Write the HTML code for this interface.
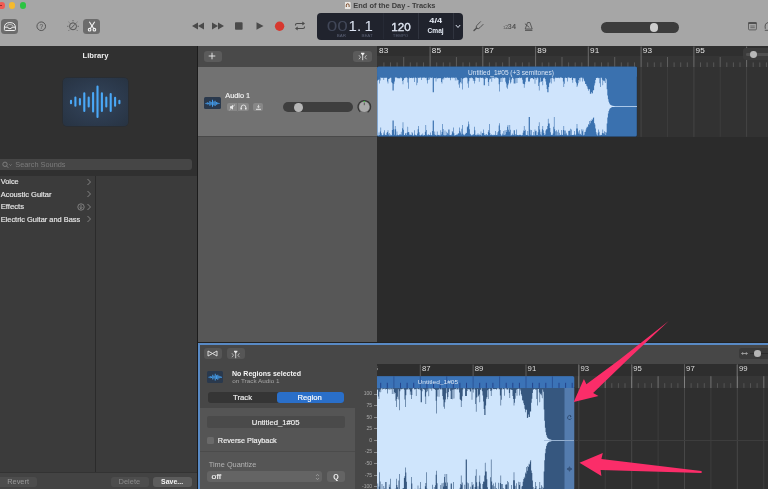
<!DOCTYPE html>
<html><head><meta charset="utf-8"><title>End of the Day - Tracks</title>
<style>
html,body{margin:0;padding:0;background:#2d2d2d;}
body{width:768px;height:489px;overflow:hidden;position:relative;font-family:"Liberation Sans",sans-serif;-webkit-font-smoothing:antialiased;}
.a{position:absolute;}
.t{position:absolute;white-space:nowrap;line-height:1;}
.rl{font-family:"Liberation Sans",sans-serif;font-size:8px;fill:#e6e6e6;}
#toolbar{left:0;top:0;width:768px;height:45.7px;background:#a6a6a6;}
.btn{position:absolute;border-radius:3px;}
.lib-item{position:absolute;left:1px;font-size:8.2px;color:#e4e4e4;line-height:1;white-space:nowrap;}
.chev{position:absolute;left:86px;width:6px;height:8px;}
#wrap{position:absolute;left:0;top:0;width:768px;height:489px;overflow:hidden;filter:url(#soft);}
</style></head><body>
<svg width="0" height="0" style="position:absolute"><filter id="soft" x="0" y="0" width="100%" height="100%" color-interpolation-filters="sRGB"><feGaussianBlur stdDeviation="0.5" edgeMode="duplicate"/></filter></svg>
<div id="wrap">

<!-- ================= TOOLBAR ================= -->
<div id="toolbar" class="a"></div>
<!-- traffic lights -->
<div class="a" style="left:-2.200px;top:2.200px;width:6.700px;height:6.700px;border-radius:50%;background:#f25a52"></div><div class="a" style="left:-1px;top:5px;width:3px;height:1.200px;background:#8e2f2a"></div>
<div class="a" style="left:8.750px;top:2.200px;width:6.700px;height:6.700px;border-radius:50%;background:#f5ba2e"></div>
<div class="a" style="left:19.750px;top:2.200px;width:6.700px;height:6.700px;border-radius:50%;background:#2cc442"></div>
<!-- title -->
<svg class="a" style="left:344px;top:1px" width="8" height="9" viewBox="0 0 8 9"><rect x="0.5" y="0.5" width="6.5" height="8" rx="1.2" fill="#e9e6e2" stroke="#8a8a8a" stroke-width="0.5"/><path d="M2.3 6V4.2a1.4 1.4 0 0 1 2.8 0V6" fill="none" stroke="#7a4a2a" stroke-width="1"/></svg>

<!-- library button (selected) -->
<div class="btn" style="left:1px;top:18.8px;width:17px;height:14.8px;border-radius:3.5px;background:#6c6c6c"></div>
<svg class="a" style="left:0;top:18px" width="20" height="16" viewBox="0 18 20 16" fill="none" stroke="#f0f0f0" stroke-width="1" stroke-linejoin="round"><path d="M4.400 27.200Q4.600 22.600 9.900 22.600T15.400 27.200"/><path d="M6.600 26.300Q7 24.500 9.900 24.500T13.200 26.300" stroke-width="0.700" stroke="#d8d8d8"/><path d="M4.400 27.200H7.900Q8 28.700 9.900 28.700T11.900 27.200H15.400V29.600Q15.400 30.500 14.400 30.500H5.400Q4.400 30.500 4.400 29.600Z"/></svg>
<!-- help -->
<svg class="a" style="left:36px;top:20.700px;will-change:transform" width="10.500" height="10.500" viewBox="0 0 10.500 10.500"><circle cx="5.250" cy="5.250" r="4.300" fill="none" stroke="#4d4d4d" stroke-width="0.900"/><text x="5.250" y="7.600" font-size="6.500" font-family="Liberation Sans,sans-serif" text-anchor="middle" fill="#4d4d4d">?</text></svg>
<!-- smart controls dial -->
<svg class="a" style="left:66px;top:19px" width="14" height="14" viewBox="0 0 14 14" fill="none" stroke="#4a4a4a"><circle cx="7" cy="7.300" r="3.500" stroke-width="0.900"/><path d="M5.200 9.100 8.800 5.500" stroke-width="0.900"/><g stroke-width="0.900" stroke-dasharray="1 100"><path d="M1.300 7.300h1"/><path d="M2.700 3l.7.700"/><path d="M7 1.200v1"/><path d="M11.300 3l-.7.700"/><path d="M12.700 7.300h-1"/><path d="M2.700 11.600l.7-.7"/><path d="M11.300 11.600l-.7-.7"/></g></svg>
<!-- scissors (selected) -->
<div class="btn" style="left:83px;top:18.8px;width:17px;height:14.8px;border-radius:3.5px;background:#6c6c6c"></div>
<svg class="a" style="left:86.500px;top:21px" width="10" height="11" viewBox="0 0 10 11" fill="none" stroke="#f4f4f4" stroke-width="1.100"><path d="M2.300 .8 6.800 7.800"/><path d="M7.700 .8 3.200 7.800"/><circle cx="2.600" cy="8.700" r="1.300"/><circle cx="7.400" cy="8.700" r="1.300"/></svg>

<!-- transport -->
<svg class="a" style="left:190px;top:20px" width="120" height="12" viewBox="0 0 120 12">
<g fill="#4a4a4a">
<path d="M2 6 8 2.500V9.500Z"/><path d="M8 6 14 2.500V9.500Z"/>
<path d="M22 2.500 28 6 22 9.500Z"/><path d="M28 2.500 34 6 28 9.500Z"/>
<rect x="45" y="2.200" width="7.600" height="7.600" rx="0.800"/>
<path d="M66.500 2.300 73.500 6 66.500 9.700Z"/>
</g>
<circle cx="89.600" cy="6.200" r="4.700" fill="#d7382f"/>
<g fill="none" stroke="#4a4a4a" stroke-width="1.100"><path d="M105.500 5.500V5Q105.500 3.500 107 3.500H113"/><path d="M114.500 6.500V7Q114.500 8.500 113 8.500H107"/></g>
<path d="M112.300 1.500 115 3.500 112.300 5.500Z" fill="#4a4a4a"/><path d="M107.700 6.500 105 8.500 107.700 10.500Z" fill="#4a4a4a"/>
</svg>

<!-- LCD -->
<div class="a" style="left:317px;top:12.500px;width:146px;height:27px;border-radius:4px;background:#20232d"></div>
<div class="a" style="left:382.600px;top:13px;width:1px;height:26px;background:#262a35"></div>
<div class="a" style="left:418.200px;top:13px;width:1px;height:26px;background:#30343f"></div>
<div class="a" style="left:452.800px;top:13px;width:1px;height:26px;background:#30343f"></div>
<svg class="a" style="left:455.100px;top:24.200px" width="6" height="5" viewBox="0 0 6 5"><path d="M.8 1 3 3.500 5.200 1" fill="none" stroke="#dfe6f2" stroke-width="1"/></svg>

<!-- tuner -->
<svg class="a" style="left:468px;top:14px" width="24" height="24" viewBox="468 14 24 24" fill="none" stroke="#505050" stroke-linecap="round"><path d="M474 30.600 476.700 27.900" stroke-width="1.400"/><path d="M480.500 21.700 476.900 25.400Q475.400 27.200 476.700 28.300 478.200 29.400 479.900 27.700L483.100 24.400" stroke-width="0.950"/></svg>
<!-- count-in -->
<!-- metronome -->
<svg class="a" style="left:520px;top:18px" width="18" height="16" viewBox="520 18 18 16" fill="none" stroke="#4c4c4c" stroke-width="0.850" stroke-linejoin="round"><path d="M527.600 22.500H529.900L532.200 29H525.200Z"/><path d="M525 30.300H532.400" stroke-width="1"/><path d="M529.300 27.400 524.900 23.700" stroke-width="0.900"/></svg>

<!-- master volume -->
<div class="a" style="left:601px;top:22px;width:78px;height:11px;border-radius:5.500px;background:#3c3c3c"></div>
<div class="a" style="left:649.600px;top:23.100px;width:8.800px;height:8.800px;border-radius:50%;background:#cdcdcd"></div>
<!-- right icons -->
<svg class="a" style="left:744px;top:18px" width="24" height="16" viewBox="744 18 24 16" fill="none" stroke="#4c4c4c"><rect x="748.500" y="22.600" width="7.900" height="7.300" rx="1" stroke-width="0.800"/><path d="M748.300 23.100H756.600" stroke-width="1.700"/><path d="M750.300 26H754.800M750.300 27.700H754.800" stroke-width="0.800" stroke="#5a5a5a"/><path d="M765.300 28.800Q764.300 22.800 768.500 22.500" stroke-width="0.900"/><path d="M764.800 30.300H769" stroke-width="0.900"/></svg>

<!-- ================= LIBRARY ================= -->
<div class="a" style="left:0;top:45.6px;width:197px;height:130px;background:#303030"></div>
<div class="a" style="left:0;top:175.600px;width:197px;height:296.400px;background:#3b3b3b"></div>
<div class="a" style="left:0;top:472px;width:197.500px;height:17px;background:#434343"></div>
<div class="a" style="left:94.700px;top:175.600px;width:1px;height:296.400px;background:#2b2b2b"></div>
<div class="a" style="left:0;top:471.500px;width:197.500px;height:1px;background:#333"></div>
<div class="a" style="left:196.8px;top:45.7px;width:1.5px;height:443.3px;background:#1c1c1c"></div>
<!-- icon -->
<div class="a" style="left:62.500px;top:77.500px;width:65.500px;height:48.500px;border-radius:4px;background:radial-gradient(ellipse at 50% 50%,#34465c 0%,#2c3a4d 60%,#273342 100%);box-shadow:0 0 0 0.500px #222a35"></div>
<svg class="a" style="left:62.500px;top:77.500px" width="65.500" height="48.500" viewBox="0 0 65.500 48.500" stroke="#4aa8f7" stroke-width="2.100" stroke-linecap="round">
<path d="M8 22.700v2.600M12.400 19.500v8.200M16.900 21v5.500M21.300 15.200v17.800M25.700 19.500v9M30.100 15v18.500M34.500 8.500v30.500M38.900 15.200v17.800M43.300 19.500v9M47.700 16v17M52.100 19.700v8M56.400 22.700v2.600"/></svg>
<!-- search -->
<div class="a" style="left:-3px;top:159px;width:195px;height:10.500px;border-radius:3px;background:#464646"></div>
<svg class="a" style="left:1.500px;top:160.500px" width="11" height="8" viewBox="0 0 11 8" fill="none" stroke="#8a8a8a" stroke-width="0.800"><circle cx="3" cy="3.300" r="2.200"/><path d="M4.600 5 6.300 6.800"/><path d="M7.500 3.500 8.500 4.500 9.500 3.500"/></svg>
<!-- list -->
<svg class="chev" style="top:177.500px" viewBox="0 0 6 8"><path d="M1.500 1 4.500 4 1.500 7" fill="none" stroke="#8c8c8c" stroke-width="0.900"/></svg>
<svg class="chev" style="top:190px" viewBox="0 0 6 8"><path d="M1.500 1 4.500 4 1.500 7" fill="none" stroke="#8c8c8c" stroke-width="0.900"/></svg>
<svg class="chev" style="top:202.700px" viewBox="0 0 6 8"><path d="M1.500 1 4.500 4 1.500 7" fill="none" stroke="#8c8c8c" stroke-width="0.900"/></svg>
<svg class="chev" style="top:215.400px" viewBox="0 0 6 8"><path d="M1.500 1 4.500 4 1.500 7" fill="none" stroke="#8c8c8c" stroke-width="0.900"/></svg>
<svg class="a" style="left:76.500px;top:202.500px" width="8" height="8" viewBox="0 0 8 8" fill="none" stroke="#9c9c9c" stroke-width="0.700"><circle cx="4" cy="4" r="3.200"/><path d="M4 2v3.500M2.600 4.300 4 5.700 5.400 4.300"/></svg>
<!-- bottom buttons -->
<div class="btn" style="left:-3px;top:476.500px;width:40px;height:10.500px;background:#4d4d4d"></div>
<div class="btn" style="left:110.500px;top:476.500px;width:38px;height:10.500px;background:#4d4d4d"></div>
<div class="btn" style="left:153px;top:476.500px;width:38.500px;height:10.500px;background:#5c5c5c"></div>

<!-- ================= TRACK HEADERS ================= -->
<div class="a" style="left:197.7px;top:45.6px;width:179.3px;height:21.2px;background:#494949"></div>
<div class="a" style="left:197.7px;top:67px;width:179.3px;height:69.300px;background:#727272"></div>
<div class="a" style="left:197.7px;top:136.500px;width:179.3px;height:205.300px;background:#575757"></div>
<div class="a" style="left:198px;top:136.200px;width:179px;height:0.900px;background:#494949"></div>
<div class="a" style="left:376.500px;top:46px;width:1px;height:296px;background:#2a2a2a"></div>
<!-- + button -->
<div class="btn" style="left:203.700px;top:50.500px;width:18.200px;height:11.100px;background:#5b5b5b"></div>
<svg class="a" style="left:208.400px;top:52.400px" width="8" height="8" viewBox="0 0 8 8"><path d="M4 .7V7.300M.7 4H7.300" stroke="#ededed" stroke-width="0.900"/></svg>
<div class="btn" style="left:353px;top:50.500px;width:18.500px;height:11.100px;background:#5b5b5b"></div>
<svg class="a" style="left:353px;top:50px" width="19" height="12" viewBox="353 50 19 12"><path d="M361 52.700H364.400V53.800L362.700 55.400 361 53.800Z" fill="#f2f2f2"/><path d="M362.700 55V60.200" stroke="#e6e6e6" stroke-width="0.900"/><path d="M358.900 55.200 360.600 57.200 358.900 59.200M366.500 55.200 364.800 57.200 366.500 59.200" fill="none" stroke="#d4d4d4" stroke-width="0.800"/></svg>
<!-- track row -->
<div class="a" style="left:204px;top:96.500px;width:17px;height:12.500px;border-radius:1.500px;background:#2a394d"></div>
<svg class="a" style="left:204px;top:96.500px" width="17" height="12.500" viewBox="0 0 17 12.500" stroke="#439ae8" stroke-width="1.050"><path d="M2 6v1M3.300 5.200v2.400M4.600 5.700v1.500M5.900 4v4.800M7.200 5v2.800M8.500 2.800v7M9.800 4.500v3.800M11.100 3.800v5.200M12.400 5v2.800M13.700 5.500v1.800M15 6v1"/></svg>
<div class="btn" style="left:226.500px;top:102.800px;width:22px;height:8.500px;border-radius:2px;background:#878787"></div>
<div class="a" style="left:237.300px;top:103px;width:0.600px;height:8.500px;background:#777"></div>
<svg class="a" style="left:228.500px;top:104px" width="7" height="6.500" viewBox="0 0 7 6.500"><path d="M1 2.300H2.300L4 .8V5.700L2.300 4.200H1Z" fill="#e8e8e8"/><path d="M.6 5.900 6 .6" stroke="#e8e8e8" stroke-width="0.700"/></svg>
<svg class="a" style="left:239.500px;top:104px" width="7" height="6.500" viewBox="0 0 7 6.500" fill="none" stroke="#f0f0f0" stroke-width="0.800"><path d="M1.200 4.500V3.300A2.300 2.300 0 0 1 5.800 3.300V4.500"/><path d="M1.200 3.800V5.600M5.800 3.800V5.600" stroke-width="1.400"/></svg>
<div class="btn" style="left:252.500px;top:102.800px;width:10.500px;height:8.500px;border-radius:2px;background:#878787"></div>
<svg class="a" style="left:254.500px;top:104px" width="7" height="6.500" viewBox="0 0 7 6.500"><path d="M3.500 .8V3.500M2.200 2.500 3.500 3.800 4.800 2.500" fill="none" stroke="#e4e4e4" stroke-width="0.800"/><path d="M1 5.300H6" stroke="#e4e4e4" stroke-width="1"/></svg>
<div class="a" style="left:282.700px;top:102.200px;width:70.500px;height:10.100px;border-radius:5.050px;background:#3e3e3e"></div>
<div class="a" style="left:293.900px;top:102.800px;width:8.800px;height:8.800px;border-radius:50%;background:#b6b6b6"></div>
<svg class="a" style="left:356px;top:99px" width="16" height="16" viewBox="0 0 16 16"><circle cx="8.300" cy="7.900" r="6.300" fill="none" stroke="#353535" stroke-width="1.300" stroke-dasharray="31 8.600" transform="rotate(130 8.300 7.900)"/><circle cx="8.300" cy="7.900" r="5.100" fill="#a9a9a9"/><circle cx="8.300" cy="2.600" r="0.750" fill="#43c843"/><path d="M8.300 3.600V6.200" stroke="#4a4a4a" stroke-width="0.900"/></svg>

<!-- ================= TRACKS AREA ================= -->
<div class="a" style="left:377.3px;top:45.6px;width:390.7px;height:21.4px;background:#2f2f2f"></div>
<div class="a" style="left:377.3px;top:56px;width:390.7px;height:11px;background:#353535"></div>
<div class="a" style="left:377.300px;top:67px;width:390.700px;height:69.900px;background:#323232"></div>
<div class="a" style="left:377.300px;top:136.900px;width:390.700px;height:204.800px;background:#2b2b2b"></div>
<svg class="a" style="left:0;top:0" width="768" height="489" viewBox="0 0 768 489">
<rect x="383.4" y="62.4" width="1" height="4.6" fill="#575757"/>
<rect x="390.0" y="62.4" width="1" height="4.6" fill="#575757"/>
<rect x="396.6" y="62.4" width="1" height="4.6" fill="#575757"/>
<rect x="403.2" y="57" width="1" height="10" fill="#5e5e5e"/>
<rect x="409.8" y="62.4" width="1" height="4.6" fill="#575757"/>
<rect x="416.4" y="62.4" width="1" height="4.6" fill="#575757"/>
<rect x="423.0" y="62.4" width="1" height="4.6" fill="#575757"/>
<rect x="429.6" y="46.5" width="1" height="20.5" fill="#6c6c6c"/>
<rect x="436.2" y="62.4" width="1" height="4.6" fill="#575757"/>
<rect x="442.8" y="62.4" width="1" height="4.6" fill="#575757"/>
<rect x="449.4" y="62.4" width="1" height="4.6" fill="#575757"/>
<rect x="455.9" y="57" width="1" height="10" fill="#5e5e5e"/>
<rect x="462.5" y="62.4" width="1" height="4.6" fill="#575757"/>
<rect x="469.1" y="62.4" width="1" height="4.6" fill="#575757"/>
<rect x="475.7" y="62.4" width="1" height="4.6" fill="#575757"/>
<rect x="482.3" y="46.5" width="1" height="20.5" fill="#6c6c6c"/>
<rect x="488.9" y="62.4" width="1" height="4.6" fill="#575757"/>
<rect x="495.5" y="62.4" width="1" height="4.6" fill="#575757"/>
<rect x="502.1" y="62.4" width="1" height="4.6" fill="#575757"/>
<rect x="508.7" y="57" width="1" height="10" fill="#5e5e5e"/>
<rect x="515.3" y="62.4" width="1" height="4.6" fill="#575757"/>
<rect x="521.9" y="62.4" width="1" height="4.6" fill="#575757"/>
<rect x="528.5" y="62.4" width="1" height="4.6" fill="#575757"/>
<rect x="535.1" y="46.5" width="1" height="20.5" fill="#6c6c6c"/>
<rect x="541.7" y="62.4" width="1" height="4.6" fill="#575757"/>
<rect x="548.3" y="62.4" width="1" height="4.6" fill="#575757"/>
<rect x="554.9" y="62.4" width="1" height="4.6" fill="#575757"/>
<rect x="561.5" y="57" width="1" height="10" fill="#5e5e5e"/>
<rect x="568.1" y="62.4" width="1" height="4.6" fill="#575757"/>
<rect x="574.7" y="62.4" width="1" height="4.6" fill="#575757"/>
<rect x="581.3" y="62.4" width="1" height="4.6" fill="#575757"/>
<rect x="587.8" y="46.5" width="1" height="20.5" fill="#6c6c6c"/>
<rect x="594.4" y="62.4" width="1" height="4.6" fill="#575757"/>
<rect x="601.0" y="62.4" width="1" height="4.6" fill="#575757"/>
<rect x="607.6" y="62.4" width="1" height="4.6" fill="#575757"/>
<rect x="614.2" y="57" width="1" height="10" fill="#5e5e5e"/>
<rect x="620.8" y="62.4" width="1" height="4.6" fill="#575757"/>
<rect x="627.4" y="62.4" width="1" height="4.6" fill="#575757"/>
<rect x="634.0" y="62.4" width="1" height="4.6" fill="#575757"/>
<rect x="640.6" y="46.5" width="1" height="20.5" fill="#6c6c6c"/>
<rect x="647.2" y="62.4" width="1" height="4.6" fill="#575757"/>
<rect x="653.8" y="62.4" width="1" height="4.6" fill="#575757"/>
<rect x="660.4" y="62.4" width="1" height="4.6" fill="#575757"/>
<rect x="667.0" y="57" width="1" height="10" fill="#5e5e5e"/>
<rect x="673.6" y="62.4" width="1" height="4.6" fill="#575757"/>
<rect x="680.2" y="62.4" width="1" height="4.6" fill="#575757"/>
<rect x="686.8" y="62.4" width="1" height="4.6" fill="#575757"/>
<rect x="693.4" y="46.5" width="1" height="20.5" fill="#6c6c6c"/>
<rect x="700.0" y="62.4" width="1" height="4.6" fill="#575757"/>
<rect x="706.6" y="62.4" width="1" height="4.6" fill="#575757"/>
<rect x="713.2" y="62.4" width="1" height="4.6" fill="#575757"/>
<rect x="719.7" y="57" width="1" height="10" fill="#5e5e5e"/>
<rect x="726.3" y="62.4" width="1" height="4.6" fill="#575757"/>
<rect x="732.9" y="62.4" width="1" height="4.6" fill="#575757"/>
<rect x="739.5" y="62.4" width="1" height="4.6" fill="#575757"/>
<rect x="746.1" y="46.5" width="1" height="20.5" fill="#6c6c6c"/>
<rect x="752.7" y="62.4" width="1" height="4.6" fill="#575757"/>
<rect x="759.3" y="62.4" width="1" height="4.6" fill="#575757"/>
<rect x="765.9" y="62.4" width="1" height="4.6" fill="#575757"/>
<rect x="772.5" y="57" width="1" height="10" fill="#5e5e5e"/>
<rect x="779.1" y="62.4" width="1" height="4.6" fill="#575757"/>
<rect x="785.7" y="62.4" width="1" height="4.6" fill="#575757"/>
<rect x="792.3" y="62.4" width="1" height="4.6" fill="#575757"/>
<rect x="640.6" y="67" width="1" height="69.9" fill="#444444"/>
<rect x="667.0" y="67" width="1" height="69.9" fill="#3c3c3c"/>
<rect x="693.4" y="67" width="1" height="69.9" fill="#444444"/>
<rect x="719.7" y="67" width="1" height="69.9" fill="#3c3c3c"/>
<rect x="746.1" y="67" width="1" height="69.9" fill="#444444"/>
<rect x="772.5" y="67" width="1" height="69.9" fill="#3c3c3c"/>
<rect x="377.100" y="66.700" width="260.100" height="70.200" rx="1.500" fill="#1f2a38"/><rect x="377.100" y="66.700" width="259.700" height="69.800" rx="1.500" fill="#3a71af"/>
<path d="M377.5 106.4V80.6 H378.1V80.0 H378.7V79.3 H379.3V83.4 H379.9V80.6 H380.5V77.5 H381.1V78.1 H381.7V77.6 H382.3V78.1 H382.9V77.8 H383.5V80.1 H384.1V78.0 H384.7V77.6 H385.3V78.1 H385.9V77.4 H386.5V78.1 H387.1V81.6 H387.7V83.4 H388.3V78.9 H388.9V79.0 H389.5V77.9 H390.1V77.7 H390.7V77.8 H391.3V82.2 H391.9V83.3 H392.5V90.5 H393.1V90.5 H393.7V83.7 H394.3V81.5 H394.9V77.6 H395.5V77.4 H396.1V77.6 H396.7V77.8 H397.3V78.2 H397.9V78.0 H398.5V78.6 H399.1V78.2 H399.7V78.2 H400.3V77.5 H400.9V77.8 H401.5V78.2 H402.1V81.0 H402.7V84.3 H403.3V80.1 H403.9V77.9 H404.5V78.2 H405.1V77.7 H405.7V77.6 H406.3V77.5 H406.9V77.9 H407.5V82.5 H408.1V88.7 H408.7V78.4 H409.3V77.6 H409.9V77.9 H410.5V77.9 H411.1V77.8 H411.7V78.0 H412.3V78.2 H412.9V77.4 H413.5V78.1 H414.1V81.9 H414.7V77.7 H415.3V77.5 H415.9V78.1 H416.5V85.2 H417.1V82.7 H417.7V77.4 H418.3V78.1 H418.9V77.9 H419.5V77.4 H420.1V77.4 H420.7V77.8 H421.3V80.0 H421.9V77.4 H422.5V78.0 H423.1V77.4 H423.7V77.8 H424.3V77.4 H424.9V78.1 H425.5V77.7 H426.1V77.7 H426.7V80.3 H427.3V83.4 H427.9V80.1 H428.5V77.8 H429.1V79.4 H429.7V77.5 H430.3V77.8 H430.9V77.8 H431.5V78.1 H432.1V77.5 H432.7V92.3 H433.3V92.3 H433.9V78.1 H434.5V78.2 H435.1V77.9 H435.7V81.4 H436.3V77.8 H436.9V78.8 H437.5V78.2 H438.1V78.0 H438.7V78.6 H439.3V78.1 H439.9V78.0 H440.5V78.3 H441.1V81.9 H441.7V83.4 H442.3V79.3 H442.9V78.1 H443.5V79.6 H444.1V77.5 H444.7V77.4 H445.3V78.0 H445.9V77.7 H446.5V77.7 H447.1V77.6 H447.7V77.5 H448.3V78.1 H448.9V77.8 H449.5V77.8 H450.1V80.3 H450.7V78.0 H451.3V77.6 H451.9V77.5 H452.5V78.2 H453.1V77.4 H453.7V78.1 H454.3V77.7 H454.9V80.5 H455.5V77.5 H456.1V77.8 H456.7V80.6 H457.3V79.6 H457.9V79.9 H458.5V84.4 H459.1V87.8 H459.7V83.3 H460.3V82.1 H460.9V77.9 H461.5V83.6 H462.1V89.6 H462.7V79.0 H463.3V78.0 H463.9V77.8 H464.5V78.1 H465.1V77.6 H465.7V77.7 H466.3V77.5 H466.9V78.2 H467.5V83.6 H468.1V87.8 H468.7V81.2 H469.3V78.1 H469.9V78.2 H470.5V77.7 H471.1V77.4 H471.7V78.2 H472.3V77.9 H472.9V81.0 H473.5V79.3 H474.1V83.4 H474.7V81.1 H475.3V77.6 H475.9V77.4 H476.5V77.4 H477.1V78.1 H477.7V77.8 H478.3V77.9 H478.9V81.7 H479.5V77.7 H480.1V77.5 H480.7V77.7 H481.3V77.9 H481.9V78.1 H482.5V77.5 H483.1V78.5 H483.7V85.2 H484.3V85.2 H484.9V79.0 H485.5V77.5 H486.1V77.7 H486.7V78.0 H487.3V78.2 H487.9V82.0 H488.5V86.1 H489.1V79.6 H489.7V77.9 H490.3V79.1 H490.9V77.4 H491.5V81.8 H492.1V77.4 H492.7V77.9 H493.3V77.5 H493.9V77.5 H494.5V78.8 H495.1V77.4 H495.7V77.5 H496.3V77.6 H496.9V77.9 H497.5V77.8 H498.1V78.4 H498.7V84.3 H499.3V91.4 H499.9V81.9 H500.5V78.2 H501.1V78.1 H501.7V82.1 H502.3V77.5 H502.9V77.8 H503.5V78.2 H504.1V77.5 H504.7V78.1 H505.3V81.8 H505.9V83.6 H506.5V87.6 H507.1V88.7 H507.7V85.2 H508.3V83.6 H508.9V80.2 H509.5V77.4 H510.1V83.4 H510.7V82.2 H511.3V79.4 H511.9V77.9 H512.5V77.4 H513.1V78.7 H513.7V83.4 H514.3V83.4 H514.9V78.2 H515.5V83.5 H516.1V78.0 H516.7V83.1 H517.3V77.9 H517.9V78.0 H518.5V77.9 H519.1V77.4 H519.7V78.2 H520.3V78.0 H520.9V77.4 H521.5V78.1 H522.1V79.7 H522.7V83.5 H523.3V83.9 H523.9V87.8 H524.5V84.3 H525.1V81.8 H525.7V78.1 H526.3V77.4 H526.9V77.5 H527.5V77.6 H528.1V81.6 H528.7V81.6 H529.3V81.6 H529.9V79.0 H530.5V77.8 H531.1V77.9 H531.7V77.9 H532.3V78.0 H532.9V79.3 H533.5V79.0 H534.1V77.5 H534.7V83.8 H535.3V78.1 H535.9V79.8 H536.5V78.0 H537.1V77.5 H537.7V78.2 H538.3V86.1 H538.9V90.5 H539.5V82.5 H540.1V77.7 H540.7V82.1 H541.3V81.5 H541.9V80.9 H542.5V85.2 H543.1V78.2 H543.7V78.2 H544.3V77.4 H544.9V79.0 H545.5V81.5 H546.1V84.7 H546.7V88.9 H547.3V92.3 H547.9V92.3 H548.5V87.0 H549.1V83.2 H549.7V82.2 H550.3V78.4 H550.9V83.4 H551.5V78.0 H552.1V77.5 H552.7V77.7 H553.3V78.8 H553.9V81.6 H554.5V78.5 H555.1V77.4 H555.7V78.0 H556.3V77.8 H556.9V77.9 H557.5V77.8 H558.1V77.7 H558.7V77.7 H559.3V78.2 H559.9V77.6 H560.5V77.4 H561.1V77.4 H561.7V77.9 H562.3V77.9 H562.9V81.5 H563.5V86.9 H564.1V83.8 H564.7V78.0 H565.3V77.4 H565.9V77.9 H566.5V77.9 H567.1V81.6 H567.7V77.4 H568.3V77.4 H568.9V77.6 H569.5V78.0 H570.1V78.0 H570.7V78.1 H571.3V77.4 H571.9V80.0 H572.5V82.7 H573.1V77.9 H573.7V78.2 H574.3V78.2 H574.9V78.3 H575.5V81.7 H576.1V83.3 H576.7V86.9 H577.3V85.4 H577.9V83.2 H578.5V79.9 H579.1V78.0 H579.7V81.5 H580.3V77.8 H580.9V77.5 H581.5V77.7 H582.1V81.5 H582.7V77.7 H583.3V78.7 H583.9V80.7 H584.5V81.6 H585.1V84.1 H585.7V84.1 H586.3V85.7 H586.9V86.6 H587.5V88.8 H588.1V90.7 H588.7V89.3 H589.3V89.3 H589.9V93.8 H590.5V93.8 H591.1V92.0 H591.7V93.4 H592.3V93.3 H592.9V90.3 H593.5V90.3 H594.1V85.4 H594.7V83.2 H595.3V80.1 H595.9V78.1 H596.5V78.0 H597.1V77.7 H597.7V77.7 H598.3V78.2 H598.9V78.1 H599.5V83.3 H600.1V86.9 H600.7V77.8 H601.3V77.8 H601.9V79.7 H602.5V85.2 H603.1V80.7 H603.7V80.4 H604.3V81.3 H604.9V83.0 H605.5V78.1 H606.1V79.3 H606.7V89.2 H607.3V95.4 H607.9V99.3 H608.5V101.8 H609.1V103.3 H609.7V104.3 H610.3V104.9 H610.9V105.3 H611.5V105.6 H612.1V105.7 H612.7V105.8 H613.3V105.9 H613.9V105.9 H614.5V106.10 H637.0 V106.70H614.5V106.9 H613.9V106.9 H613.3V107.0 H612.7V107.1 H612.1V107.2 H611.5V107.5 H610.9V107.9 H610.3V108.5 H609.7V109.5 H609.1V111.0 H608.5V113.5 H607.9V117.4 H607.3V123.6 H606.7V132.6 H606.1V135.1 H605.5V132.1 H604.9V131.2 H604.3V134.3 H603.7V132.9 H603.1V129.4 H602.5V133.0 H601.9V135.0 H601.3V134.7 H600.7V135.2 H600.1V135.3 H599.5V131.7 H598.9V129.4 H598.3V132.8 H597.7V135.4 H597.1V134.5 H596.5V132.2 H595.9V128.6 H595.3V124.5 H594.7V123.0 H594.1V117.2 H593.5V118.1 H592.9V119.8 H592.3V119.3 H591.7V121.1 H591.1V120.6 H590.5V123.2 H589.9V121.1 H589.3V124.9 H588.7V124.1 H588.1V127.3 H587.5V126.6 H586.9V127.7 H586.3V129.4 H585.7V131.7 H585.1V132.0 H584.5V134.7 H583.9V135.2 H583.3V129.5 H582.7V131.2 H582.1V129.3 H581.5V135.1 H580.9V133.8 H580.3V134.6 H579.7V130.2 H579.1V133.5 H578.5V131.5 H577.9V128.5 H577.3V124.1 H576.7V128.4 H576.1V134.6 H575.5V135.2 H574.9V131.1 H574.3V134.6 H573.7V135.1 H573.1V135.1 H572.5V134.9 H571.9V129.6 H571.3V134.9 H570.7V128.8 H570.1V131.0 H569.5V130.6 H568.9V131.0 H568.3V135.3 H567.7V135.2 H567.1V134.6 H566.5V132.7 H565.9V130.6 H565.3V134.5 H564.7V130.6 H564.1V125.9 H563.5V129.9 H562.9V134.9 H562.3V134.7 H561.7V129.9 H561.1V134.7 H560.5V134.9 H559.9V132.8 H559.3V135.2 H558.7V129.7 H558.1V135.3 H557.5V131.8 H556.9V130.3 H556.3V135.2 H555.7V131.2 H555.1V129.2 H554.5V117.0 H553.9V126.8 H553.3V133.5 H552.7V135.0 H552.1V134.7 H551.5V134.9 H550.9V132.3 H550.3V128.0 H549.7V123.6 H549.1V123.6 H548.5V118.8 H547.9V125.9 H547.3V129.3 H546.7V129.2 H546.1V130.6 H545.5V134.6 H544.9V135.1 H544.3V133.0 H543.7V130.3 H543.1V125.9 H542.5V129.3 H541.9V135.3 H541.3V131.8 H540.7V134.6 H540.1V129.6 H539.5V122.3 H538.9V125.9 H538.3V132.2 H537.7V135.1 H537.1V134.9 H536.5V130.7 H535.9V131.2 H535.3V129.5 H534.7V135.3 H534.1V132.1 H533.5V135.2 H532.9V135.3 H532.3V135.3 H531.7V130.1 H531.1V134.8 H530.5V129.7 H529.9V117.0 H529.3V117.0 H528.7V135.4 H528.1V131.0 H527.5V135.1 H526.9V135.0 H526.3V134.8 H525.7V129.8 H525.1V131.0 H524.5V125.9 H523.9V130.5 H523.3V132.7 H522.7V135.1 H522.1V135.4 H521.5V135.1 H520.9V134.8 H520.3V135.1 H519.7V134.7 H519.1V135.3 H518.5V135.1 H517.9V135.0 H517.3V134.9 H516.7V129.5 H516.1V134.0 H515.5V135.2 H514.9V130.3 H514.3V130.3 H513.7V135.0 H513.1V134.7 H512.5V133.5 H511.9V134.9 H511.3V135.4 H510.7V129.7 H510.1V125.0 H509.5V131.8 H508.9V129.7 H508.3V125.0 H507.7V126.7 H507.1V132.0 H506.5V129.9 H505.9V134.6 H505.3V130.2 H504.7V134.9 H504.1V131.1 H503.5V134.7 H502.9V133.4 H502.3V135.2 H501.7V135.4 H501.1V134.3 H500.5V130.1 H499.9V123.2 H499.3V125.4 H498.7V131.3 H498.1V134.8 H497.5V132.3 H496.9V134.9 H496.3V135.0 H495.7V131.0 H495.1V134.8 H494.5V135.1 H493.9V134.7 H493.3V135.3 H492.7V135.1 H492.1V134.6 H491.5V134.7 H490.9V135.0 H490.3V133.0 H489.7V124.1 H489.1V130.0 H488.5V131.8 H487.9V134.9 H487.3V135.2 H486.7V134.1 H486.1V134.5 H485.5V135.3 H484.9V134.9 H484.3V133.2 H483.7V129.4 H483.1V133.0 H482.5V133.3 H481.9V135.4 H481.3V131.4 H480.7V134.9 H480.1V134.2 H479.5V135.2 H478.9V134.8 H478.3V133.2 H477.7V134.8 H477.1V135.2 H476.5V134.5 H475.9V135.1 H475.3V130.3 H474.7V126.7 H474.1V134.3 H473.5V134.6 H472.9V134.8 H472.3V135.2 H471.7V135.2 H471.1V134.6 H470.5V133.7 H469.9V129.3 H469.3V124.3 H468.7V121.4 H468.1V126.3 H467.5V127.2 H466.9V133.0 H466.3V132.8 H465.7V134.0 H465.1V135.3 H464.5V134.6 H463.9V134.7 H463.3V133.7 H462.7V125.0 H462.1V128.7 H461.5V134.6 H460.9V132.4 H460.3V131.1 H459.7V127.6 H459.1V133.8 H458.5V133.0 H457.9V134.6 H457.3V134.6 H456.7V134.7 H456.1V135.2 H455.5V134.9 H454.9V135.4 H454.3V133.2 H453.7V127.6 H453.1V132.3 H452.5V130.9 H451.9V134.4 H451.3V135.2 H450.7V135.1 H450.1V134.9 H449.5V129.4 H448.9V129.4 H448.3V134.6 H447.7V132.9 H447.1V131.7 H446.5V134.9 H445.9V135.2 H445.3V130.5 H444.7V135.2 H444.1V135.0 H443.5V129.1 H442.9V124.1 H442.3V132.0 H441.7V134.6 H441.1V130.2 H440.5V135.2 H439.9V135.2 H439.3V134.8 H438.7V134.9 H438.1V135.1 H437.5V131.5 H436.9V135.4 H436.3V134.8 H435.7V134.9 H435.1V131.4 H434.5V134.6 H433.9V120.5 H433.3V120.5 H432.7V131.1 H432.1V135.2 H431.5V134.9 H430.9V132.5 H430.3V135.0 H429.7V135.0 H429.1V134.6 H428.5V134.6 H427.9V135.2 H427.3V134.7 H426.7V130.0 H426.1V125.0 H425.5V131.8 H424.9V135.1 H424.3V135.0 H423.7V135.4 H423.1V133.4 H422.5V135.2 H421.9V134.5 H421.3V135.0 H420.7V135.4 H420.1V134.9 H419.5V132.3 H418.9V125.9 H418.3V129.3 H417.7V133.4 H417.1V134.9 H416.5V135.4 H415.9V135.0 H415.3V134.6 H414.7V130.3 H414.1V135.3 H413.5V135.4 H412.9V133.3 H412.3V132.1 H411.7V135.0 H411.1V135.0 H410.5V134.6 H409.9V134.8 H409.3V132.2 H408.7V131.9 H408.1V126.7 H407.5V132.4 H406.9V135.1 H406.3V133.0 H405.7V133.6 H405.1V135.0 H404.5V134.9 H403.9V129.8 H403.3V122.3 H402.7V128.2 H402.1V134.8 H401.5V131.8 H400.9V134.6 H400.3V134.4 H399.7V134.6 H399.1V135.2 H398.5V135.0 H397.9V134.7 H397.3V131.5 H396.7V135.3 H396.1V129.2 H395.5V125.9 H394.9V134.8 H394.3V129.3 H393.7V120.5 H393.1V120.5 H392.5V130.1 H391.9V135.1 H391.3V135.4 H390.7V134.6 H390.1V135.4 H389.5V133.1 H388.9V134.6 H388.3V130.3 H387.7V132.0 H387.1V132.8 H386.5V134.9 H385.9V135.0 H385.3V134.4 H384.7V130.3 H384.1V132.6 H383.5V134.8 H382.9V135.2 H382.3V135.0 H381.7V133.3 H381.1V127.6 H380.5V131.4 H379.9V135.1 H379.3V132.5 H378.7V135.4 H378.1V135.4 H377.5Z" fill="#cfe4fc"/>
<rect x="377.300" y="66.700" width="259.500" height="10.400" rx="1" fill="#3a71af"/>
</svg>
<!-- ================= EDITOR ================= -->
<div class="a" style="left:197.7px;top:341.7px;width:570.3px;height:1.6px;background:#222"></div>
<div class="a" style="left:197.7px;top:343.3px;width:570.3px;height:146px;background:#474747"></div>
<div class="a" style="left:198.1px;top:343.4px;width:569.9px;height:1.700px;background:#598ac5"></div>
<div class="a" style="left:198.1px;top:343.4px;width:1.700px;height:146px;background:#598ac5"></div>
<!-- editor right area -->
<div class="a" style="left:377px;top:364px;width:391px;height:12.500px;background:#2e2e2e"></div>
<div class="a" style="left:377px;top:376.500px;width:391px;height:112.500px;background:#2f2f2f"></div>
<div class="a" style="left:377px;top:376.200px;width:391px;height:11.900px;background:#363636"></div>
<svg class="a" style="left:0;top:0;will-change:transform" width="768" height="489" viewBox="0 0 768 489">
<defs><clipPath id="edclip"><rect x="377" y="364" width="391" height="125"/></clipPath></defs>
<g clip-path="url(#edclip)">
<rect x="578.3" y="376.2" width="1" height="113" fill="#474747"/>
<rect x="578.3" y="364.6" width="1" height="23.4" fill="#808080"/>
<rect x="584.9" y="383.2" width="1" height="4.7" fill="#545454"/>
<rect x="591.5" y="383.2" width="1" height="4.7" fill="#545454"/>
<rect x="598.1" y="383.2" width="1" height="4.7" fill="#545454"/>
<rect x="604.7" y="376.2" width="1" height="113" fill="#3e3e3e"/>
<rect x="604.7" y="376.2" width="1" height="11.8" fill="#707070"/>
<rect x="611.3" y="383.2" width="1" height="4.7" fill="#545454"/>
<rect x="617.9" y="383.2" width="1" height="4.7" fill="#545454"/>
<rect x="624.5" y="383.2" width="1" height="4.7" fill="#545454"/>
<rect x="631.2" y="376.2" width="1" height="113" fill="#474747"/>
<rect x="631.2" y="364.6" width="1" height="23.4" fill="#808080"/>
<rect x="637.8" y="383.2" width="1" height="4.7" fill="#545454"/>
<rect x="644.4" y="383.2" width="1" height="4.7" fill="#545454"/>
<rect x="651.0" y="383.2" width="1" height="4.7" fill="#545454"/>
<rect x="657.6" y="376.2" width="1" height="113" fill="#3e3e3e"/>
<rect x="657.6" y="376.2" width="1" height="11.8" fill="#707070"/>
<rect x="664.2" y="383.2" width="1" height="4.7" fill="#545454"/>
<rect x="670.8" y="383.2" width="1" height="4.7" fill="#545454"/>
<rect x="677.4" y="383.2" width="1" height="4.7" fill="#545454"/>
<rect x="684.0" y="376.2" width="1" height="113" fill="#474747"/>
<rect x="684.0" y="364.6" width="1" height="23.4" fill="#808080"/>
<rect x="690.6" y="383.2" width="1" height="4.7" fill="#545454"/>
<rect x="697.2" y="383.2" width="1" height="4.7" fill="#545454"/>
<rect x="703.8" y="383.2" width="1" height="4.7" fill="#545454"/>
<rect x="710.4" y="376.2" width="1" height="113" fill="#3e3e3e"/>
<rect x="710.4" y="376.2" width="1" height="11.8" fill="#707070"/>
<rect x="717.0" y="383.2" width="1" height="4.7" fill="#545454"/>
<rect x="723.6" y="383.2" width="1" height="4.7" fill="#545454"/>
<rect x="730.2" y="383.2" width="1" height="4.7" fill="#545454"/>
<rect x="736.8" y="376.2" width="1" height="113" fill="#474747"/>
<rect x="736.8" y="364.6" width="1" height="23.4" fill="#808080"/>
<rect x="743.4" y="383.2" width="1" height="4.7" fill="#545454"/>
<rect x="750.0" y="383.2" width="1" height="4.7" fill="#545454"/>
<rect x="756.6" y="383.2" width="1" height="4.7" fill="#545454"/>
<rect x="763.3" y="376.2" width="1" height="113" fill="#3e3e3e"/>
<rect x="763.3" y="376.2" width="1" height="11.8" fill="#707070"/>
<rect x="769.9" y="383.2" width="1" height="4.7" fill="#545454"/>
<rect x="776.5" y="383.2" width="1" height="4.7" fill="#545454"/>
<rect x="783.1" y="383.2" width="1" height="4.7" fill="#545454"/>
<rect x="575" y="440" width="193" height="1" fill="#3d3d3d"/>
<rect x="314" y="376.200" width="260.200" height="113" rx="1.500" fill="#36577f"/>
<path d="M314.5 440.5V394.0 H315.1V392.9 H315.7V391.8 H316.3V399.1 H316.9V394.1 H317.5V388.5 H318.1V389.6 H318.7V388.7 H319.3V389.5 H319.9V389.1 H320.5V393.2 H321.1V389.3 H321.7V388.7 H322.3V389.6 H322.9V388.3 H323.5V389.5 H324.1V395.9 H324.7V399.1 H325.3V390.9 H325.9V391.2 H326.5V389.2 H327.1V388.8 H327.7V389.0 H328.3V397.0 H328.9V398.9 H329.5V411.8 H330.1V411.8 H330.7V399.7 H331.3V395.7 H331.9V388.6 H332.5V388.3 H333.1V388.6 H333.7V389.1 H334.3V389.8 H334.9V389.4 H335.5V390.5 H336.1V389.8 H336.7V389.8 H337.3V388.5 H337.9V389.0 H338.5V389.7 H339.1V394.8 H339.7V400.7 H340.3V393.1 H340.9V389.3 H341.5V389.8 H342.1V388.9 H342.7V388.7 H343.3V388.4 H343.9V389.2 H344.5V397.4 H345.1V408.7 H345.7V390.2 H346.3V388.6 H346.9V389.1 H347.5V389.2 H348.1V388.9 H348.7V389.3 H349.3V389.7 H349.9V388.3 H350.5V389.5 H351.1V396.4 H351.7V388.9 H352.3V388.5 H352.9V389.5 H353.5V402.3 H354.1V397.9 H354.7V388.3 H355.3V389.5 H355.9V389.1 H356.5V388.3 H357.1V388.3 H357.7V388.9 H358.3V392.9 H358.9V388.3 H359.5V389.4 H360.1V388.2 H360.7V389.1 H361.3V388.4 H361.9V389.6 H362.5V388.8 H363.1V388.9 H363.7V393.6 H364.3V399.1 H364.9V393.1 H365.5V389.1 H366.1V391.9 H366.7V388.5 H367.3V389.0 H367.9V389.1 H368.5V389.6 H369.1V388.5 H369.7V415.0 H370.3V415.0 H370.9V389.5 H371.5V389.7 H372.1V389.1 H372.7V395.5 H373.3V389.1 H373.9V390.8 H374.5V389.8 H375.1V389.3 H375.7V390.4 H376.3V389.6 H376.9V389.3 H377.5V389.9 H378.1V396.4 H378.7V399.1 H379.3V391.8 H379.9V389.6 H380.5V392.2 H381.1V388.4 H381.7V388.2 H382.3V389.4 H382.9V388.8 H383.5V388.9 H384.1V388.7 H384.7V388.5 H385.3V389.5 H385.9V389.1 H386.5V388.9 H387.1V393.5 H387.7V389.4 H388.3V388.7 H388.9V388.5 H389.5V389.8 H390.1V388.4 H390.7V389.6 H391.3V388.8 H391.9V393.9 H392.5V388.6 H393.1V388.9 H393.7V394.0 H394.3V392.3 H394.9V392.9 H395.5V400.8 H396.1V407.1 H396.7V398.9 H397.3V396.8 H397.9V389.3 H398.5V399.4 H399.1V410.3 H399.7V391.2 H400.3V389.3 H400.9V389.0 H401.5V389.5 H402.1V388.7 H402.7V388.9 H403.3V388.6 H403.9V389.7 H404.5V399.4 H405.1V407.1 H405.7V395.2 H406.3V389.5 H406.9V389.7 H407.5V388.9 H408.1V388.3 H408.7V389.7 H409.3V389.2 H409.9V394.8 H410.5V391.6 H411.1V399.1 H411.7V395.0 H412.3V388.7 H412.9V388.3 H413.5V388.3 H414.1V389.6 H414.7V389.0 H415.3V389.2 H415.9V396.1 H416.5V388.8 H417.1V388.5 H417.7V388.9 H418.3V389.3 H418.9V389.5 H419.5V388.4 H420.1V390.2 H420.7V402.3 H421.3V402.3 H421.9V391.2 H422.5V388.5 H423.1V388.9 H423.7V389.3 H424.3V389.8 H424.9V396.6 H425.5V403.9 H426.1V392.2 H426.7V389.2 H427.3V391.3 H427.9V388.4 H428.5V396.2 H429.1V388.3 H429.7V389.2 H430.3V388.6 H430.9V388.5 H431.5V390.8 H432.1V388.3 H432.7V388.4 H433.3V388.7 H433.9V389.3 H434.5V389.0 H435.1V390.1 H435.7V400.7 H436.3V413.4 H436.9V396.4 H437.5V389.8 H438.1V389.5 H438.7V396.7 H439.3V388.4 H439.9V389.0 H440.5V389.7 H441.1V388.4 H441.7V389.6 H442.3V396.1 H442.9V399.4 H443.5V406.7 H444.1V408.7 H444.7V402.3 H445.3V399.4 H445.9V393.3 H446.5V388.3 H447.1V399.2 H447.7V397.0 H448.3V391.9 H448.9V389.2 H449.5V388.3 H450.1V390.7 H450.7V399.1 H451.3V399.1 H451.9V389.7 H452.5V399.3 H453.1V389.4 H453.7V398.5 H454.3V389.3 H454.9V389.3 H455.5V389.1 H456.1V388.3 H456.7V389.7 H457.3V389.3 H457.9V388.3 H458.5V389.5 H459.1V392.4 H459.7V399.3 H460.3V400.1 H460.9V407.1 H461.5V400.8 H462.1V396.2 H462.7V389.6 H463.3V388.2 H463.9V388.5 H464.5V388.6 H465.1V395.9 H465.7V395.9 H466.3V395.9 H466.9V391.1 H467.5V389.0 H468.1V389.3 H468.7V389.3 H469.3V389.5 H469.9V391.7 H470.5V391.3 H471.1V388.5 H471.7V399.8 H472.3V389.5 H472.9V392.6 H473.5V389.3 H474.1V388.4 H474.7V389.7 H475.3V404.0 H475.9V411.8 H476.5V397.6 H477.1V388.9 H477.7V396.8 H478.3V395.7 H478.9V394.6 H479.5V402.3 H480.1V389.7 H480.7V389.8 H481.3V388.2 H481.9V391.2 H482.5V395.6 H483.1V401.4 H483.7V408.9 H484.3V415.0 H484.9V415.0 H485.5V405.6 H486.1V398.8 H486.7V396.9 H487.3V390.2 H487.9V399.1 H488.5V389.3 H489.1V388.5 H489.7V388.9 H490.3V390.9 H490.9V395.9 H491.5V390.4 H492.1V388.3 H492.7V389.3 H493.3V389.0 H493.9V389.2 H494.5V389.1 H495.1V388.9 H495.7V388.9 H496.3V389.8 H496.9V388.7 H497.5V388.3 H498.1V388.3 H498.7V389.2 H499.3V389.2 H499.9V395.6 H500.5V405.5 H501.1V399.8 H501.7V389.4 H502.3V388.3 H502.9V389.1 H503.5V389.2 H504.1V395.8 H504.7V388.2 H505.3V388.4 H505.9V388.6 H506.5V389.4 H507.1V389.4 H507.7V389.5 H508.3V388.3 H508.9V393.0 H509.5V397.9 H510.1V389.2 H510.7V389.7 H511.3V389.8 H511.9V390.0 H512.5V396.0 H513.1V399.0 H513.7V405.5 H514.3V402.7 H514.9V398.7 H515.5V392.9 H516.1V389.4 H516.7V395.7 H517.3V389.1 H517.9V388.5 H518.5V388.9 H519.1V395.6 H519.7V388.8 H520.3V390.6 H520.9V394.3 H521.5V395.8 H522.1V400.3 H522.7V400.4 H523.3V403.3 H523.9V404.9 H524.5V408.8 H525.1V412.3 H525.7V409.8 H526.3V409.7 H526.9V417.9 H527.5V417.8 H528.1V414.6 H528.7V417.0 H529.3V416.9 H529.9V411.5 H530.5V411.6 H531.1V402.7 H531.7V398.8 H532.3V393.1 H532.9V389.5 H533.5V389.4 H534.1V388.9 H534.7V388.8 H535.3V389.7 H535.9V389.6 H536.5V398.9 H537.1V405.5 H537.7V389.0 H538.3V389.0 H538.9V392.5 H539.5V402.3 H540.1V394.2 H540.7V393.6 H541.3V395.3 H541.9V398.3 H542.5V389.6 H543.1V391.8 H543.7V409.5 H544.3V420.7 H544.9V427.8 H545.5V432.2 H546.1V435.0 H546.7V436.8 H547.3V437.9 H547.9V438.6 H548.5V439.0 H549.1V439.3 H549.7V439.5 H550.3V439.6 H550.9V439.7 H551.5V440.20 H564.5 V440.80H551.5V441.3 H550.9V441.4 H550.3V441.5 H549.7V441.7 H549.1V442.0 H548.5V442.4 H547.9V443.1 H547.3V444.2 H546.7V446.0 H546.1V448.8 H545.5V453.2 H544.9V460.3 H544.3V471.5 H543.7V487.7 H543.1V492.1 H542.5V486.7 H541.9V485.2 H541.3V490.7 H540.7V488.2 H540.1V481.9 H539.5V488.3 H538.9V491.9 H538.3V491.4 H537.7V492.3 H537.1V492.6 H536.5V486.1 H535.9V481.9 H535.3V488.0 H534.7V492.7 H534.1V491.1 H533.5V486.9 H532.9V480.5 H532.3V473.1 H531.7V470.4 H531.1V460.0 H530.5V461.6 H529.9V464.6 H529.3V463.7 H528.7V467.0 H528.1V466.1 H527.5V470.7 H526.9V466.9 H526.3V473.8 H525.7V472.4 H525.1V478.2 H524.5V476.8 H523.9V478.9 H523.3V481.8 H522.7V486.1 H522.1V486.6 H521.5V491.5 H520.9V492.4 H520.3V482.1 H519.7V485.1 H519.1V481.8 H518.5V492.2 H517.9V489.8 H517.3V491.3 H516.7V483.3 H516.1V489.3 H515.5V485.7 H514.9V480.3 H514.3V472.3 H513.7V480.2 H513.1V491.3 H512.5V492.3 H511.9V484.9 H511.3V491.2 H510.7V492.2 H510.1V492.2 H509.5V491.9 H508.9V482.3 H508.3V491.7 H507.7V480.9 H507.1V484.8 H506.5V484.1 H505.9V484.8 H505.3V492.6 H504.7V492.3 H504.1V491.2 H503.5V487.9 H502.9V484.0 H502.3V491.1 H501.7V484.1 H501.1V475.5 H500.5V482.9 H499.9V491.8 H499.3V491.5 H498.7V482.8 H498.1V491.4 H497.5V491.8 H496.9V488.1 H496.3V492.3 H495.7V482.5 H495.1V492.4 H494.5V486.3 H493.9V483.6 H493.3V492.3 H492.7V485.2 H492.1V481.5 H491.5V459.6 H490.9V477.2 H490.3V489.4 H489.7V491.9 H489.1V491.5 H488.5V491.8 H487.9V487.2 H487.3V479.3 H486.7V471.4 H486.1V471.5 H485.5V462.8 H484.9V475.6 H484.3V481.7 H483.7V481.5 H483.1V484.1 H482.5V491.3 H481.9V492.1 H481.3V488.4 H480.7V483.4 H480.1V475.5 H479.5V481.8 H478.9V492.5 H478.3V486.2 H477.7V491.3 H477.1V482.2 H476.5V469.2 H475.9V475.7 H475.3V486.9 H474.7V492.1 H474.1V491.8 H473.5V484.2 H472.9V485.2 H472.3V482.0 H471.7V492.5 H471.1V486.7 H470.5V492.3 H469.9V492.6 H469.3V492.5 H468.7V483.2 H468.1V491.6 H467.5V482.4 H466.9V459.6 H466.3V459.6 H465.7V492.7 H465.1V484.8 H464.5V492.2 H463.9V492.0 H463.3V491.6 H462.7V482.6 H462.1V484.8 H461.5V475.5 H460.9V483.9 H460.3V487.8 H459.7V492.1 H459.1V492.7 H458.5V492.2 H457.9V491.7 H457.3V492.1 H456.7V491.4 H456.1V492.4 H455.5V492.1 H454.9V492.0 H454.3V491.8 H453.7V482.1 H453.1V490.2 H452.5V492.4 H451.9V483.5 H451.3V483.5 H450.7V492.0 H450.1V491.5 H449.5V489.3 H448.9V491.8 H448.3V492.8 H447.7V482.5 H447.1V473.9 H446.5V486.1 H445.9V482.4 H445.3V473.9 H444.7V477.1 H444.1V486.6 H443.5V482.7 H442.9V491.2 H442.3V483.3 H441.7V491.8 H441.1V485.0 H440.5V491.4 H439.9V489.2 H439.3V492.3 H438.7V492.7 H438.1V490.6 H437.5V483.2 H436.9V470.7 H436.3V474.7 H435.7V485.3 H435.1V491.6 H434.5V487.1 H433.9V491.8 H433.3V491.9 H432.7V484.8 H432.1V491.6 H431.5V492.1 H430.9V491.4 H430.3V492.5 H429.7V492.2 H429.1V491.2 H428.5V491.5 H427.9V491.9 H427.3V488.4 H426.7V472.3 H426.1V483.0 H425.5V486.3 H424.9V491.9 H424.3V492.3 H423.7V490.4 H423.1V491.1 H422.5V492.5 H421.9V491.8 H421.3V488.8 H420.7V481.9 H420.1V488.4 H419.5V488.9 H418.9V492.6 H418.3V485.4 H417.7V491.9 H417.1V490.5 H416.5V492.3 H415.9V491.6 H415.3V488.7 H414.7V491.6 H414.1V492.3 H413.5V491.0 H412.9V492.2 H412.3V483.6 H411.7V477.1 H411.1V490.6 H410.5V491.3 H409.9V491.6 H409.3V492.3 H408.7V492.4 H408.1V491.3 H407.5V489.6 H406.9V481.8 H406.3V472.6 H405.7V467.6 H405.1V476.3 H404.5V478.0 H403.9V488.3 H403.3V488.1 H402.7V490.2 H402.1V492.4 H401.5V491.2 H400.9V491.5 H400.3V489.7 H399.7V473.9 H399.1V480.6 H398.5V491.2 H397.9V487.3 H397.3V484.9 H396.7V478.7 H396.1V489.9 H395.5V488.4 H394.9V491.3 H394.3V491.3 H393.7V491.4 H393.1V492.4 H392.5V491.8 H391.9V492.7 H391.3V488.7 H390.7V478.7 H390.1V487.0 H389.5V484.6 H388.9V490.8 H388.3V492.4 H387.7V492.2 H387.1V491.7 H386.5V481.9 H385.9V481.9 H385.3V491.2 H384.7V488.2 H384.1V486.0 H383.5V491.8 H382.9V492.3 H382.3V483.9 H381.7V492.3 H381.1V492.1 H380.5V481.4 H379.9V472.3 H379.3V486.5 H378.7V491.2 H378.1V483.4 H377.5V492.3 H376.9V492.4 H376.3V491.6 H375.7V491.8 H375.1V492.2 H374.5V485.6 H373.9V492.7 H373.3V491.6 H372.7V491.8 H372.1V485.4 H371.5V491.3 H370.9V466.0 H370.3V466.0 H369.7V485.0 H369.1V492.3 H368.5V491.7 H367.9V487.6 H367.3V492.1 H366.7V492.0 H366.1V491.2 H365.5V491.2 H364.9V492.3 H364.3V491.4 H363.7V483.0 H363.1V473.9 H362.5V486.3 H361.9V492.1 H361.3V492.0 H360.7V492.8 H360.1V489.2 H359.5V492.3 H358.9V491.1 H358.3V491.9 H357.7V492.7 H357.1V491.8 H356.5V487.1 H355.9V475.5 H355.3V481.7 H354.7V489.1 H354.1V491.8 H353.5V492.8 H352.9V492.0 H352.3V491.2 H351.7V483.5 H351.1V492.5 H350.5V492.7 H349.9V489.0 H349.3V486.7 H348.7V492.0 H348.1V492.0 H347.5V491.3 H346.9V491.5 H346.3V487.0 H345.7V486.4 H345.1V477.1 H344.5V487.3 H343.9V492.2 H343.3V488.4 H342.7V489.4 H342.1V491.9 H341.5V491.8 H340.9V482.6 H340.3V469.2 H339.7V479.7 H339.1V491.6 H338.5V486.1 H337.9V491.3 H337.3V490.8 H336.7V491.3 H336.1V492.4 H335.5V492.0 H334.9V491.5 H334.3V485.7 H333.7V492.5 H333.1V481.5 H332.5V475.5 H331.9V491.5 H331.3V481.6 H330.7V466.0 H330.1V466.0 H329.5V483.2 H328.9V492.2 H328.3V492.7 H327.7V491.2 H327.1V492.8 H326.5V488.5 H325.9V491.3 H325.3V483.5 H324.7V486.6 H324.1V488.0 H323.5V491.7 H322.9V492.0 H322.3V490.9 H321.7V483.5 H321.1V487.6 H320.5V491.6 H319.9V492.4 H319.3V492.1 H318.7V488.9 H318.1V478.7 H317.5V485.4 H316.9V492.1 H316.3V487.5 H315.7V492.7 H315.1V492.7 H314.5Z" fill="#cfe5fc"/>
<rect x="564.500" y="387.900" width="9.700" height="102" fill="#547cae"/>
<rect x="544" y="440" width="30" height="0.800" fill="#9db7d6"/>
<rect x="314" y="376.200" width="260.200" height="11.700" rx="1.500" fill="#3b73b7"/>
<rect x="367.0" y="376.2" width="1" height="11.7" fill="#2c5598"/>
<rect x="373.6" y="382.8" width="1" height="5.1" fill="#24448c"/>
<rect x="380.2" y="382.8" width="1" height="5.1" fill="#24448c"/>
<rect x="386.8" y="382.8" width="1" height="5.1" fill="#24448c"/>
<rect x="393.4" y="376.2" width="1" height="11.7" fill="#2c5598"/>
<rect x="400.0" y="382.8" width="1" height="5.1" fill="#24448c"/>
<rect x="406.6" y="382.8" width="1" height="5.1" fill="#24448c"/>
<rect x="413.2" y="382.8" width="1" height="5.1" fill="#24448c"/>
<rect x="419.8" y="376.2" width="1" height="11.7" fill="#2c5598"/>
<rect x="426.4" y="382.8" width="1" height="5.1" fill="#24448c"/>
<rect x="433.0" y="382.8" width="1" height="5.1" fill="#24448c"/>
<rect x="439.6" y="382.8" width="1" height="5.1" fill="#24448c"/>
<rect x="446.2" y="376.2" width="1" height="11.7" fill="#2c5598"/>
<rect x="452.8" y="382.8" width="1" height="5.1" fill="#24448c"/>
<rect x="459.4" y="382.8" width="1" height="5.1" fill="#24448c"/>
<rect x="466.0" y="382.8" width="1" height="5.1" fill="#24448c"/>
<rect x="472.6" y="376.2" width="1" height="11.7" fill="#2c5598"/>
<rect x="479.2" y="382.8" width="1" height="5.1" fill="#24448c"/>
<rect x="485.8" y="382.8" width="1" height="5.1" fill="#24448c"/>
<rect x="492.4" y="382.8" width="1" height="5.1" fill="#24448c"/>
<rect x="499.1" y="376.2" width="1" height="11.7" fill="#2c5598"/>
<rect x="505.7" y="382.8" width="1" height="5.1" fill="#24448c"/>
<rect x="512.3" y="382.8" width="1" height="5.1" fill="#24448c"/>
<rect x="518.9" y="382.8" width="1" height="5.1" fill="#24448c"/>
<rect x="525.5" y="376.2" width="1" height="11.7" fill="#2c5598"/>
<rect x="532.1" y="382.8" width="1" height="5.1" fill="#24448c"/>
<rect x="538.7" y="382.8" width="1" height="5.1" fill="#24448c"/>
<rect x="545.3" y="382.8" width="1" height="5.1" fill="#24448c"/>
<rect x="551.9" y="376.2" width="1" height="11.7" fill="#2c5598"/>
<rect x="558.5" y="382.8" width="1" height="5.1" fill="#24448c"/>
<rect x="565.1" y="382.8" width="1" height="5.1" fill="#24448c"/>
<rect x="571.7" y="382.8" width="1" height="5.1" fill="#24448c"/>
<text x="417.5" y="383.7" textLength="40.7" lengthAdjust="spacingAndGlyphs" font-size="6.2" font-family="Liberation Sans,sans-serif" fill="#d8e4f4">Untitled_1#05</text>
<rect x="367.0" y="364.6" width="1" height="11.6" fill="#5e5e5e"/>
<text x="369.1" y="371.2" font-size="7.2" textLength="8.6" lengthAdjust="spacingAndGlyphs" font-family="Liberation Sans,sans-serif" fill="#dedede">85</text>
<rect x="419.8" y="364.6" width="1" height="11.6" fill="#5e5e5e"/>
<text x="421.9" y="371.2" font-size="7.2" textLength="8.6" lengthAdjust="spacingAndGlyphs" font-family="Liberation Sans,sans-serif" fill="#dedede">87</text>
<rect x="472.6" y="364.6" width="1" height="11.6" fill="#5e5e5e"/>
<text x="474.7" y="371.2" font-size="7.2" textLength="8.6" lengthAdjust="spacingAndGlyphs" font-family="Liberation Sans,sans-serif" fill="#dedede">89</text>
<rect x="525.5" y="364.6" width="1" height="11.6" fill="#5e5e5e"/>
<text x="527.6" y="371.2" font-size="7.2" textLength="8.6" lengthAdjust="spacingAndGlyphs" font-family="Liberation Sans,sans-serif" fill="#dedede">91</text>
<rect x="578.3" y="364.6" width="1" height="11.6" fill="#5e5e5e"/>
<text x="580.4" y="371.2" font-size="7.2" textLength="8.6" lengthAdjust="spacingAndGlyphs" font-family="Liberation Sans,sans-serif" fill="#dedede">93</text>
<rect x="631.2" y="364.6" width="1" height="11.6" fill="#5e5e5e"/>
<text x="633.3" y="371.2" font-size="7.2" textLength="8.6" lengthAdjust="spacingAndGlyphs" font-family="Liberation Sans,sans-serif" fill="#dedede">95</text>
<rect x="684.0" y="364.6" width="1" height="11.6" fill="#5e5e5e"/>
<text x="686.1" y="371.2" font-size="7.2" textLength="8.6" lengthAdjust="spacingAndGlyphs" font-family="Liberation Sans,sans-serif" fill="#dedede">97</text>
<rect x="736.8" y="364.6" width="1" height="11.6" fill="#5e5e5e"/>
<text x="738.9" y="371.2" font-size="7.2" textLength="8.6" lengthAdjust="spacingAndGlyphs" font-family="Liberation Sans,sans-serif" fill="#dedede">99</text>
<path d="M570.9 416.1A2 2 0 1 0 571.4 418.3" fill="none" stroke="#2b4568" stroke-width="0.8"/><path d="M569.9 415 571.6 416.2 570.2 417.4Z" fill="#2b4568"/>
<path d="M569.5 466.5V471.500" stroke="#2b4568" stroke-width="0.700"/><path d="M568.7 467.300 566.900 469 568.700 470.700ZM570.300 467.300 572.100 469 570.300 470.700Z" fill="#2b4568"/>
</g>
</svg>
<!-- editor toolbar buttons -->
<div class="btn" style="left:204px;top:348.400px;width:17.500px;height:10.500px;background:#565656"></div>
<svg class="a" style="left:207px;top:350.300px" width="11" height="7" viewBox="0 0 11 7" fill="none" stroke="#e8e8e8" stroke-width="0.900" stroke-linejoin="round"><path d="M1 1 5.500 3.500 1 6ZM10 1 5.500 3.500 10 6Z"/></svg>
<div class="btn" style="left:227px;top:348.400px;width:17.600px;height:10.500px;background:#565656"></div>
<svg class="a" style="left:225.900px;top:347.700px" width="19" height="12" viewBox="353 50 19 12"><path d="M361 52.700H364.400V53.800L362.700 55.400 361 53.800Z" fill="#e8e8e8"/><path d="M362.700 55V60.200" stroke="#dcdcdc" stroke-width="0.900"/><path d="M358.900 55.200 360.600 57.200 358.900 59.200M366.500 55.200 364.800 57.200 366.500 59.200" fill="none" stroke="#c4c4c4" stroke-width="0.800"/></svg>
<!-- right zoom -->
<div class="a" style="left:739px;top:348.3px;width:32px;height:10.3px;background:#3a3a3a;border-radius:3px"></div>
<div class="a" style="left:750px;top:352.9px;width:18px;height:1.2px;background:#2c2c2c"></div>
<svg class="a" style="left:741px;top:351px" width="7" height="5" viewBox="0 0 8 5" fill="none" stroke="#d8d8d8" stroke-width="0.700"><path d="M1 2.500H7M2.300 1 .8 2.500 2.300 4M5.700 1 7.200 2.500 5.700 4"/></svg>
<div class="a" style="left:754.3px;top:350.1px;width:6.600px;height:6.600px;border-radius:50%;background:#b4b4b4"></div>
<!-- inspector -->
<div class="a" style="left:206.500px;top:371px;width:16.500px;height:12px;border-radius:1.500px;background:#2a394d"></div>
<svg class="a" style="left:206.500px;top:371px" width="16.500" height="12" viewBox="0 0 17 12.500" stroke="#439ae8" stroke-width="1.050"><path d="M2 6v1M3.300 5.200v2.400M4.600 5.700v1.500M5.900 4v4.800M7.200 5v2.800M8.500 2.800v7M9.800 4.500v3.800M11.100 3.800v5.200M12.400 5v2.800M13.700 5.500v1.800M15 6v1"/></svg>
<div class="a" style="left:208px;top:392px;width:136px;height:11px;border-radius:3px;background:#353535"></div>
<div class="a" style="left:277px;top:392px;width:67px;height:11px;border-radius:3px;background:#2a6fc9"></div>
<div class="a" style="left:199.8px;top:408.4px;width:155.600px;height:80.600px;background:#555555"></div>
<div class="a" style="left:206.500px;top:416px;width:138.500px;height:12px;border-radius:2px;background:#4a4a4a"></div>
<div class="a" style="left:206.500px;top:437px;width:7.500px;height:7px;border-radius:1.500px;background:#6a6a6a"></div>
<div class="a" style="left:199.800px;top:451.400px;width:155.600px;height:1px;background:#4b4b4b"></div>
<div class="a" style="left:206.700px;top:471.400px;width:115.300px;height:10.400px;border-radius:3px;background:#646464"></div>
<svg class="a" style="left:315px;top:472.500px" width="5" height="8" viewBox="0 0 5 8" fill="none" stroke="#a8a8a8" stroke-width="0.700"><path d="M1 3 2.500 1.300 4 3M1 5 2.500 6.700 4 5"/></svg>
<div class="a" style="left:327.300px;top:471.400px;width:17.700px;height:10.400px;border-radius:3px;background:#646464"></div>
<!-- scale -->
<div class="a" style="left:373.500px;top:393.6px;width:3px;height:0.700px;background:#8c8c8c"></div>
<div class="a" style="left:373.500px;top:405.3px;width:3px;height:0.700px;background:#8c8c8c"></div>
<div class="a" style="left:373.500px;top:416.8px;width:3px;height:0.700px;background:#8c8c8c"></div>
<div class="a" style="left:373.500px;top:428.3px;width:3px;height:0.700px;background:#8c8c8c"></div>
<div class="a" style="left:373.500px;top:439.8px;width:3px;height:0.700px;background:#8c8c8c"></div>
<div class="a" style="left:373.500px;top:451.8px;width:3px;height:0.700px;background:#8c8c8c"></div>
<div class="a" style="left:373.500px;top:463.3px;width:3px;height:0.700px;background:#8c8c8c"></div>
<div class="a" style="left:373.500px;top:474.8px;width:3px;height:0.700px;background:#8c8c8c"></div>
<div class="a" style="left:373.500px;top:485.8px;width:3px;height:0.700px;background:#8c8c8c"></div>


<svg class="a" style="left:0;top:0;will-change:transform" width="768" height="489" viewBox="0 0 768 489" font-family="Liberation Sans, sans-serif">
<text x="353.32" y="7.50" font-size="7.20" fill="#3c3c3c" font-weight="bold" textLength="82.11" lengthAdjust="spacingAndGlyphs">End of the Day - Tracks</text>
<text x="326.80" y="30.80" font-size="15.00" fill="#414758" font-weight="normal" textLength="21.10" lengthAdjust="spacingAndGlyphs">00</text>
<text y="30.8" font-size="15" fill="#dbe3f1"><tspan x="348.6">1</tspan><tspan x="357">.</tspan><tspan x="364.4">1</tspan></text>
<text x="336.75" y="37.30" font-size="4.20" fill="#5a6175" font-weight="normal" textLength="9.30" lengthAdjust="spacingAndGlyphs">BAR</text>
<text x="361.45" y="37.30" font-size="4.20" fill="#5a6175" font-weight="normal" textLength="11.30" lengthAdjust="spacingAndGlyphs">BEAT</text>
<text x="391.22" y="31.25" font-size="11.40" fill="#dfe6f2" font-weight="normal" textLength="19.47" lengthAdjust="spacingAndGlyphs" stroke="#dfe6f2" stroke-width="0.35">120</text>
<text x="392.75" y="37.30" font-size="4.20" fill="#5a6175" font-weight="normal" textLength="15.50" lengthAdjust="spacingAndGlyphs">TEMPO</text>
<text x="429.38" y="23.30" font-size="7.00" fill="#e4eaf4" font-weight="bold" textLength="12.74" lengthAdjust="spacingAndGlyphs">4/4</text>
<text x="427.60" y="33.40" font-size="6.60" fill="#e4eaf4" font-weight="bold" textLength="16.09" lengthAdjust="spacingAndGlyphs">Cmaj</text>
<text y="28.7" fill="#4c4c4c"><tspan x="503" font-size="4.4" fill="#565656">1</tspan><tspan x="505.2" font-size="5.2" fill="#545454">2</tspan><tspan x="507.9" font-size="6.3" stroke="#505050" stroke-width="0.15">3</tspan><tspan x="511.9" font-size="7.2" stroke="#4a4a4a" stroke-width="0.2">4</tspan></text>
<text x="82.56" y="58.40" font-size="7.40" fill="#f0f0f0" font-weight="bold" textLength="25.89" lengthAdjust="spacingAndGlyphs">Library</text>
<text x="15.26" y="166.70" font-size="7.30" fill="#7c7c7c" font-weight="normal" textLength="50.28" lengthAdjust="spacingAndGlyphs">Search Sounds</text>
<text x="0.66" y="184.00" font-size="7.30" fill="#e8e8e8" font-weight="normal" textLength="18.08" lengthAdjust="spacingAndGlyphs" stroke="#e8e8e8" stroke-width="0.15">Voice</text>
<text x="0.66" y="196.60" font-size="7.30" fill="#e8e8e8" font-weight="normal" textLength="50.88" lengthAdjust="spacingAndGlyphs" stroke="#e8e8e8" stroke-width="0.15">Acoustic Guitar</text>
<text x="0.66" y="209.20" font-size="7.30" fill="#e8e8e8" font-weight="normal" textLength="23.38" lengthAdjust="spacingAndGlyphs" stroke="#e8e8e8" stroke-width="0.15">Effects</text>
<text x="0.66" y="221.80" font-size="7.30" fill="#e8e8e8" font-weight="normal" textLength="79.58" lengthAdjust="spacingAndGlyphs" stroke="#e8e8e8" stroke-width="0.15">Electric Guitar and Bass</text>
<text x="7.17" y="483.90" font-size="7.20" fill="#9a9a9a" font-weight="normal" textLength="21.86" lengthAdjust="spacingAndGlyphs">Revert</text>
<text x="118.47" y="483.90" font-size="7.20" fill="#8c8c8c" font-weight="normal" textLength="21.66" lengthAdjust="spacingAndGlyphs">Delete</text>
<text x="161.07" y="483.90" font-size="7.20" fill="#f4f4f4" font-weight="bold" textLength="22.06" lengthAdjust="spacingAndGlyphs">Save...</text>
<text x="225.32" y="97.75" font-size="7.20" fill="#f4f4f4" font-weight="normal" textLength="24.86" lengthAdjust="spacingAndGlyphs" stroke="#f4f4f4" stroke-width="0.15">Audio 1</text>
<text x="379.08" y="52.70" font-size="7.00" fill="#e2e2e2" font-weight="normal" textLength="9.14" lengthAdjust="spacingAndGlyphs">83</text>
<text x="431.84" y="52.70" font-size="7.00" fill="#e2e2e2" font-weight="normal" textLength="9.14" lengthAdjust="spacingAndGlyphs">85</text>
<text x="484.60" y="52.70" font-size="7.00" fill="#e2e2e2" font-weight="normal" textLength="9.14" lengthAdjust="spacingAndGlyphs">87</text>
<text x="537.36" y="52.70" font-size="7.00" fill="#e2e2e2" font-weight="normal" textLength="9.14" lengthAdjust="spacingAndGlyphs">89</text>
<text x="590.12" y="52.70" font-size="7.00" fill="#e2e2e2" font-weight="normal" textLength="9.14" lengthAdjust="spacingAndGlyphs">91</text>
<text x="642.88" y="52.70" font-size="7.00" fill="#e2e2e2" font-weight="normal" textLength="9.14" lengthAdjust="spacingAndGlyphs">93</text>
<text x="695.64" y="52.70" font-size="7.00" fill="#e2e2e2" font-weight="normal" textLength="9.14" lengthAdjust="spacingAndGlyphs">95</text>
<text x="748.40" y="52.70" font-size="7.00" fill="#e2e2e2" font-weight="normal" textLength="9.14" lengthAdjust="spacingAndGlyphs">97</text>
<text x="468.10" y="74.60" font-size="6.60" fill="#d8e4f4" font-weight="normal" textLength="85.79" lengthAdjust="spacingAndGlyphs">Untitled_1#05 (+3 semitones)</text>
<text x="232.04" y="375.80" font-size="7.60" fill="#f4f4f4" font-weight="bold" textLength="69.01" lengthAdjust="spacingAndGlyphs">No Regions selected</text>
<text x="232.15" y="382.70" font-size="5.90" fill="#a4a4a4" font-weight="normal" textLength="47.51" lengthAdjust="spacingAndGlyphs">on Track Audio 1</text>
<text x="233.07" y="399.80" font-size="7.20" fill="#f0f0f0" font-weight="normal" textLength="18.96" lengthAdjust="spacingAndGlyphs" stroke="#f0f0f0" stroke-width="0.15">Track</text>
<text x="297.57" y="399.80" font-size="7.20" fill="#ffffff" font-weight="normal" textLength="24.26" lengthAdjust="spacingAndGlyphs" stroke="#ffffff" stroke-width="0.15">Region</text>
<text x="251.87" y="424.80" font-size="7.20" fill="#f0f0f0" font-weight="normal" textLength="47.56" lengthAdjust="spacingAndGlyphs" stroke="#f0f0f0" stroke-width="0.15">Untitled_1#05</text>
<text x="217.87" y="442.70" font-size="7.20" fill="#f2f2f2" font-weight="normal" textLength="58.86" lengthAdjust="spacingAndGlyphs" stroke="#f2f2f2" stroke-width="0.15">Reverse Playback</text>
<text x="208.77" y="466.70" font-size="7.20" fill="#b4b4b4" font-weight="normal" textLength="47.56" lengthAdjust="spacingAndGlyphs">Time Quantize</text>
<text x="211.57" y="478.70" font-size="7.20" fill="#f2f2f2" font-weight="normal" textLength="9.56" lengthAdjust="spacingAndGlyphs" stroke="#f2f2f2" stroke-width="0.15">off</text>
<text x="336.00" y="479.00" font-size="7.00" fill="#f2f2f2" font-weight="bold" text-anchor="middle">Q</text>
<text x="372.20" y="395.40" font-size="5.10" fill="#a8a8a8" font-weight="normal" text-anchor="end">100</text>
<text x="372.20" y="407.00" font-size="5.10" fill="#a8a8a8" font-weight="normal" text-anchor="end">75</text>
<text x="372.20" y="418.60" font-size="5.10" fill="#a8a8a8" font-weight="normal" text-anchor="end">50</text>
<text x="372.20" y="430.30" font-size="5.10" fill="#a8a8a8" font-weight="normal" text-anchor="end">25</text>
<text x="372.20" y="441.80" font-size="5.10" fill="#a8a8a8" font-weight="normal" text-anchor="end">0</text>
<text x="372.20" y="453.30" font-size="5.10" fill="#a8a8a8" font-weight="normal" text-anchor="end">-25</text>
<text x="372.20" y="464.80" font-size="5.10" fill="#a8a8a8" font-weight="normal" text-anchor="end">-50</text>
<text x="372.20" y="476.50" font-size="5.10" fill="#a8a8a8" font-weight="normal" text-anchor="end">-75</text>
<text x="372.20" y="487.90" font-size="5.10" fill="#a8a8a8" font-weight="normal" text-anchor="end">-100</text>
</svg>
<!-- zoom slider right -->
<div class="a" style="left:743px;top:48.2px;width:28px;height:11.6px;background:#3b3b3b;border-radius:3px"></div>
<div class="a" style="left:746px;top:53.4px;width:24px;height:2.4px;border-radius:1.2px;background:#505050"></div>
<div class="a" style="left:750.2px;top:51.3px;width:6.800px;height:6.800px;border-radius:50%;background:#b8b8b8"></div>


<!-- ================= ARROWS ================= -->
<svg class="a" style="left:0;top:0" width="768" height="489" viewBox="0 0 768 489">
<path d="M668.7 321 L619.1 360 L586.4 384.3 L583.9 378.9 L573.7 402.1 L598.5 396 L593.1 392.9 L627.3 360 Z" fill="#fb2d69"/>
<path d="M701.3 470.9 Q702.6 472 701.3 473 L600.6 470.1 L601.4 476.1 L579.5 462.8 L602.8 453.1 L601.4 459.1 Z" fill="#fb2d69"/>
</svg>
</div>
</body></html>
